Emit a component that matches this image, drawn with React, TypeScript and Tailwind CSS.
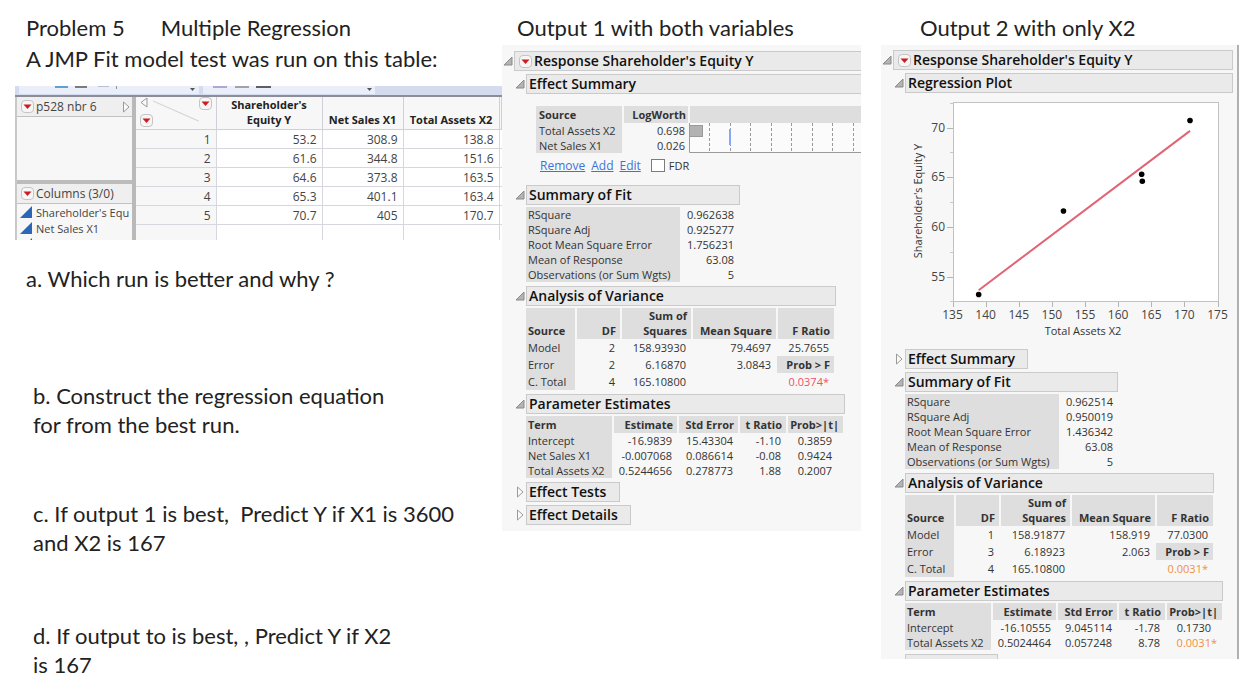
import React from "react";

type Cell = string;

const sourceRows: Cell[][] = [
    ["1", "53.2", "308.9", "138.8"],
    ["2", "61.6", "344.8", "151.6"],
    ["3", "64.6", "373.8", "163.5"],
    ["4", "65.3", "401.1", "163.4"],
    ["5", "70.7", "405", "170.7"],
];

const fitLabels = [
    "RSquare",
    "RSquare Adj",
    "Root Mean Square Error",
    "Mean of Response",
    "Observations (or Sum Wgts)",
];

const points = [
    [138.8, 53.2],
    [151.6, 61.6],
    [163.5, 64.6],
    [163.4, 65.3],
    [170.7, 70.7],
];

const RedTriangle: React.FC<{ label: string }> = ({ label }) => (
    <button
        type="button"
        aria-label={label}
        className="flex h-[13px] w-[13px] shrink-0 items-center justify-center rounded-sm border border-[#c4c4c4] bg-[#f6f6f6]"
    >
        <svg width="9" height="5" viewBox="0 0 9 5">
            <path d="M0.5 0.5h8L4.5 5z" fill="#cf1820" />
        </svg>
    </button>
);

const Disclosure: React.FC<{ open?: boolean; label: string }> = ({
    open = true,
    label,
}) => (
    <button
        type="button"
        aria-label={label}
        aria-expanded={open}
        className="flex w-3 shrink-0 items-center justify-center"
    >
        {open ? (
            <svg width="10" height="10" viewBox="0 0 10 10">
                <path d="M9 1v8H1z" fill="#b4b4b4" stroke="#8a8a8a" />
            </svg>
        ) : (
            <svg width="8" height="12" viewBox="0 0 8 12">
                <path d="M1.5 1v10L7 6z" fill="#fafafa" stroke="#9a9a9a" />
            </svg>
        )}
    </button>
);

const Title: React.FC<{
    text: string;
    width: string;
    open?: boolean;
    menu?: boolean;
}> = ({ text, width, open, menu }) => (
    <div className="flex h-5">
        <Disclosure open={open} label={`Toggle ${text}`} />
        <h3
            className={`flex min-w-0 items-center gap-0.5 border border-[#cacaca] bg-[#eaeaea] text-[14px] leading-none font-semibold whitespace-nowrap text-[#111] ${menu ? "pl-1" : "pl-0.5"} ${width}`}
        >
            {menu && <RedTriangle label={`${text} menu`} />}
            {text}
        </h3>
    </div>
);

const SummaryOfFit: React.FC<{ values: string[] }> = ({ values }) => (
    <table className="ml-3 mt-0.5 w-[210px] table-fixed">
        <colgroup>
            <col className="w-[154px]" />
            <col />
        </colgroup>
        <tbody>
            {fitLabels.map((label, i) => (
                <tr key={label} className="h-[15px]">
                    <th
                        scope="row"
                        className="bg-[#dedede] pl-0.5 text-left font-normal whitespace-nowrap"
                    >
                        {label}
                    </th>
                    <td className="pr-0.5 text-right">{values[i]}</td>
                </tr>
            ))}
        </tbody>
    </table>
);

const Variance: React.FC<{
    model: string[];
    error: string[];
    total: string[];
    prob: string;
    probColor: string;
}> = ({ model, error, total, prob, probColor }) => {
    const head = "border-r-2 border-[#f7f7f7] bg-[#dedede] pr-1 pb-px align-bottom";
    const label =
        "border-r-2 border-[#f7f7f7] bg-[#dedede] pl-0.5 text-left font-normal";
    return (
        <table className="ml-3 mt-0.5 w-[310px] table-fixed text-right whitespace-nowrap">
            <colgroup>
                <col className="w-[50px]" />
                <col className="w-[45px]" />
                <col className="w-[71px]" />
                <col className="w-[85px]" />
                <col />
            </colgroup>
            <thead>
                <tr className="h-[31px] leading-[15px]">
                    <th className={`${head} pl-0.5 text-left`}>Source</th>
                    <th className={head}>DF</th>
                    <th className={head}>
                        Sum of
                        <br />
                        Squares
                    </th>
                    <th className={head}>Mean Square</th>
                    <th className={head}>F Ratio</th>
                </tr>
            </thead>
            <tbody>
                <tr className="h-[17px]">
                    <th scope="row" className={label}>Model</th>
                    {model.map((v) => (
                        <td key={v} className="pr-1.5">{v}</td>
                    ))}
                </tr>
                <tr className="h-[17px]">
                    <th scope="row" className={label}>Error</th>
                    {error.map((v) => (
                        <td key={v} className="pr-1.5">{v}</td>
                    ))}
                    <th className="border-r-2 border-[#f7f7f7] bg-[#dedede] pr-1">
                        Prob &gt; F
                    </th>
                </tr>
                <tr className="h-[17px]">
                    <th scope="row" className={label}>C. Total</th>
                    {total.map((v) => (
                        <td key={v} className="pr-1.5">{v}</td>
                    ))}
                    <td />
                    <td className={`pr-1.5 ${probColor}`}>{prob}</td>
                </tr>
            </tbody>
        </table>
    );
};

const Estimates: React.FC<{ rows: string[][] }> = ({ rows }) => {
    const head = "border-r-2 border-[#f7f7f7] bg-[#dedede] pr-1";
    return (
        <table className="ml-3 mt-0.5 w-[319px] table-fixed text-right whitespace-nowrap">
            <colgroup>
                <col className="w-[87px]" />
                <col className="w-[65px]" />
                <col className="w-[61px]" />
                <col className="w-[48px]" />
                <col />
            </colgroup>
            <thead>
                <tr className="h-[17px]">
                    <th className={`${head} pl-0.5 text-left`}>Term</th>
                    <th className={head}>Estimate</th>
                    <th className={head}>Std Error</th>
                    <th className={head}>t Ratio</th>
                    <th className={head}>Prob&gt;|t|</th>
                </tr>
            </thead>
            <tbody>
                {rows.map(([term, ...values]) => (
                    <tr key={term} className="h-[15px]">
                        <th
                            scope="row"
                            className="border-r-2 border-[#f7f7f7] bg-[#dedede] pl-0.5 text-left font-normal"
                        >
                            {term}
                        </th>
                        {values.map((v, i) => (
                            <td
                                key={i}
                                className={
                                    v.endsWith("*")
                                        ? "pr-1.5 text-[#f0913f]"
                                        : i === 3
                                          ? "pr-3"
                                          : "pr-1.5"
                                }
                            >
                                {v}
                            </td>
                        ))}
                    </tr>
                ))}
            </tbody>
        </table>
    );
};

const EffectSummary: React.FC = () => (
    <div className="ml-[22px] mt-3">
        <table className="w-full table-fixed text-right whitespace-nowrap">
            <colgroup>
                <col className="w-[87px]" />
                <col className="w-[66px]" />
                <col />
            </colgroup>
            <thead>
                <tr className="h-[17px] bg-[#dedede]">
                    <th className="border-r-2 border-[#f7f7f7] pl-[3px] text-left">Source</th>
                    <th className="border-r-2 border-[#f7f7f7] pr-0.5">LogWorth</th>
                    <th aria-label="LogWorth bar" />
                </tr>
            </thead>
            <tbody>
                <tr className="h-[15px]">
                    <th
                        scope="row"
                        className="border-r-2 border-[#f7f7f7] bg-[#dedede] pl-[3px] text-left font-normal"
                    >
                        Total Assets X2
                    </th>
                    <td className="pr-1">0.698</td>
                    <td rowSpan={2} className="overflow-hidden p-0">
                        <svg width="172" height="30" className="block">
                            <rect x="0" y="0" width="172" height="30" fill="#fbfbfb" />
                            {[20, 41, 61, 82, 102, 123, 143, 164].map((x) => (
                                <path
                                    key={x}
                                    d={`M${x + 0.5} 0V30`}
                                    stroke="#999"
                                    strokeDasharray="3 2"
                                />
                            ))}
                            <path d="M0.5 0V29.5H172" fill="none" stroke="#9a9a9a" />
                            <rect x="0.5" y="2.5" width="13" height="11" fill="#b2b2b2" stroke="#9a9a9a" />
                            <rect x="40" y="6" width="2" height="16" fill="#86a8fa" />
                        </svg>
                    </td>
                </tr>
                <tr className="h-[15px]">
                    <th
                        scope="row"
                        className="border-r-2 border-[#f7f7f7] bg-[#dedede] pl-[3px] text-left font-normal"
                    >
                        Net Sales X1
                    </th>
                    <td className="pr-1">0.026</td>
                </tr>
            </tbody>
        </table>
        <div className="mt-1 flex h-4 items-center gap-1.5 pl-1 text-[12px]">
            <a href="#remove" className="text-[#3d73d9] underline">Remove</a>
            <a href="#add" className="text-[#3d73d9] underline">Add</a>
            <a href="#edit" className="text-[#3d73d9] underline">Edit</a>
            <label className="ml-1 flex items-center gap-1 text-[11px]">
                <input
                    type="checkbox"
                    className="h-[13px] w-[14px] appearance-none border border-[#7c7c7c] bg-white"
                />
                FDR
            </label>
        </div>
    </div>
);

const px = (x: number) => 72.5 + ((x - 135) / 40) * 265;
const py = (y: number) => 34.5 + ((70 - y) / 5) * 49.7;

const RegressionPlot: React.FC = () => (
    <svg
        width="356"
        height="256"
        className="-mr-1 block text-[12px]"
        role="img"
        aria-label="Regression plot"
    >
        <rect x="72.5" y="9.5" width="265" height="199" fill="#fff" stroke="#c2c2c2" />
        {[55, 60, 65, 70].map((v) => (
            <g key={v}>
                <path d={`M66 ${Math.round(py(v)) + 0.5}H72`} stroke="#b4b4b4" />
                <text x="64" y={py(v) + 4} textAnchor="end" fill="#444">
                    {v}
                </text>
            </g>
        ))}
        {[52.5, 57.5, 62.5, 67.5, 72.5].map((v) => (
            <path key={v} d={`M69 ${Math.round(py(v)) + 0.5}H72`} stroke="#c8c8c8" />
        ))}
        {[135, 140, 145, 150, 155, 160, 165, 170, 175].map((v) => (
            <g key={v}>
                <path d={`M${Math.round(px(v)) - 0.5} 209V214`} stroke="#b4b4b4" />
                <text x={px(v) - 1} y="226" textAnchor="middle" fill="#444">
                    {v}
                </text>
            </g>
        ))}
        <path
            d={`M${px(138.8)} ${py(53.63)}L${px(170.7)} ${py(69.66)}`}
            stroke="#e06474"
            strokeWidth="2"
        />
        {points.map(([x, y]) => (
            <circle key={x} cx={px(x)} cy={py(y)} r="2.8" fill="#000" />
        ))}
        <text x="202" y="242" textAnchor="middle" className="text-[11px]" fill="#333">
            Total Assets X2
        </text>
        <text
            transform="translate(41 108) rotate(-90)"
            textAnchor="middle"
            className="text-[11px]"
            fill="#333"
        >
            Shareholder's Equity Y
        </text>
    </svg>
);

const ColumnItem: React.FC<{ name: string }> = ({ name }) => (
    <li className="flex h-4 items-center gap-1 pl-[3px] whitespace-nowrap">
        <svg width="12" height="12" viewBox="0 0 12 12" className="shrink-0">
            <path d="M12 0v12H0z" fill="#2c66b8" />
        </svg>
        {name}
    </li>
);

const Toolbar: React.FC = () => (
    <div className="h-[9px] bg-[#d5dbee]">
        <svg width="360" height="9" className="block">
            <rect x="4" width="180" height="8" fill="#e9eef8" />
            <rect x="188" width="172" height="8" fill="#e9eef8" />
            <path d="M40 0h13v2h-13z" fill="#5f9fd6" />
            <path d="M60 0h12v2h-12z" fill="#7b7b7b" />
            <path d="M83 0h11v1h-11z" fill="#b9bfd2" />
            <path d="M101.5 0v3" stroke="#8c93a8" />
            <path d="M198 0h14v2h-14z" fill="#a9a9d4" />
            <path d="M220 0h14v2h-14z" fill="#a0a3ab" />
            <path d="M241 0h15v2h-15z" fill="#5b5f68" />
            <path d="M175 2h5l-2.500 3z" fill="#555" />
            <path d="M352 2h5l-2.500 3z" fill="#555" />
        </svg>
    </div>
);

const DataTable: React.FC = () => {
    const head = "border-r border-b border-[#cfcfd6] bg-[#f7f7f7] pb-0.5 align-bottom";
    return (
        <div className="ml-[15px] mt-3 h-[154px] overflow-hidden text-[12px] leading-[15px] text-[#444]">
            <Toolbar />
            <div className="flex h-[145px] border-t-2 border-[#8d8d97]">
                <div className="flex w-[121px] shrink-0 flex-col border-r-4 border-l-2 border-r-[#b9b9b9] border-l-[#c9c9c9] bg-[#f7f7f7]">
                    <div className="flex h-5 shrink-0 items-center gap-0.5 border-b border-[#c2c2c2] bg-[#efefef] pl-1">
                        <RedTriangle label="Table menu" />
                        <span className="flex-1 whitespace-nowrap">p528 nbr 6</span>
                        <Disclosure open={false} label="Toggle table panel" />
                    </div>
                    <div className="h-[63px] shrink-0" />
                    <div className="flex h-6 shrink-0 items-center gap-0.5 border-t-4 border-b border-t-[#bcbcbc] border-b-[#c2c2c2] bg-[#efefef] pl-1">
                        <RedTriangle label="Columns menu" />
                        <span className="whitespace-nowrap">Columns (3/0)</span>
                    </div>
                    <ul className="overflow-hidden text-[11px]">
                        <ColumnItem name="Shareholder's Equ" />
                        <ColumnItem name="Net Sales X1" />
                        <ColumnItem name="Total Assets X2" />
                    </ul>
                </div>
                <table className="w-full table-fixed self-start bg-white text-right">
                    <colgroup>
                        <col className="w-[80px]" />
                        <col className="w-[106px]" />
                        <col className="w-[81px]" />
                        <col className="w-[96px]" />
                        <col />
                    </colgroup>
                    <thead>
                        <tr className="h-8 text-center text-[11px] text-[#222]">
                            <th className={head}>
                                <div className="flex h-[30px] justify-between px-1">
                                    <div className="flex flex-col justify-between">
                                        <svg width="8" height="11" viewBox="0 0 8 11">
                                            <path d="M7 1v9L1 5.500z" fill="#fafafa" stroke="#9a9a9a" />
                                        </svg>
                                        <RedTriangle label="Rows menu" />
                                    </div>
                                    <svg className="min-w-0 flex-1" viewBox="0 0 40 30" preserveAspectRatio="none">
                                        <path d="M0 4L40 24" stroke="#d4d4d4" />
                                    </svg>
                                    <RedTriangle label="Column menu" />
                                </div>
                            </th>
                            <th className={head}>
                                Shareholder's
                                <br />
                                Equity Y
                            </th>
                            <th className={`${head} whitespace-nowrap`}>Net Sales X1</th>
                            <th className={`${head} whitespace-nowrap`}>Total Assets X2</th>
                            <th className={head} aria-label="Empty column" />
                        </tr>
                    </thead>
                    <tbody>
                        {[...sourceRows, ["", "", "", ""]].map((row, r) => (
                            <tr key={r} className="h-[19px]">
                                {row.map((v, c) => (
                                    <td
                                        key={c}
                                        className={`border-r border-b border-[#d6d6de] pr-[5px] ${c === 0 ? "bg-[#f7f7f7]" : ""}`}
                                    >
                                        {v}
                                    </td>
                                ))}
                                <td className="border-b border-[#d6d6de]" />
                            </tr>
                        ))}
                    </tbody>
                </table>
            </div>
        </div>
    );
};

const questionClass = "pl-[33px] leading-[29px]";

const App: React.FC = () => (
    <main className="grid min-h-screen grid-cols-[502fr_379fr_375fr] items-start bg-white pt-3 font-['Lato',sans-serif] text-[22px] leading-[31px] text-[#222]">
        <section className="min-w-0">
            <h1 className="flex gap-9 pl-[26px]">
                <span>Problem 5</span>
                <span>Multiple Regression</span>
            </h1>
            <p className="pl-[26px] whitespace-nowrap">
                A JMP Fit model test was run on this table:
            </p>
            <div className="font-['Open_Sans',sans-serif]">
                <DataTable />
            </div>
            <p className="mt-6 pl-[26px] leading-[29px]">a. Which run is better and why ?</p>
            <p className={`mt-22 ${questionClass}`}>
                b. Construct the regression equation
                <br />
                for from the best run.
            </p>
            <p className={`mt-15 ${questionClass}`}>
                c. If output 1 is best,&nbsp; Predict Y if X1 is 3600
                <br />
                and X2 is 167
            </p>
            <p className={`mt-16 ${questionClass}`}>
                d. If output to is best, , Predict Y if X2
                <br />
                is 167
            </p>
        </section>

        <section className="min-w-0 pr-5">
            <h2 className="pl-[15px] whitespace-nowrap">Output 1 with both variables</h2>
            <div className="mt-0.5 overflow-hidden bg-[#f7f7f7] pt-1.5 pb-1.5 font-['Open_Sans',sans-serif] text-[11px] leading-[15px] text-[#333]">
                <Title text="Response Shareholder's Equity Y" width="flex-1 border-r-0" menu />
                <div className="mt-[3px] pl-3">
                    <Title text="Effect Summary" width="flex-1 border-r-0" />
                    <EffectSummary />
                    <div className="mt-3">
                        <Title text="Summary of Fit" width="w-[214px]" />
                    </div>
                    <SummaryOfFit values={["0.962638", "0.925277", "1.756231", "63.08", "5"]} />
                    <div className="mt-1">
                        <Title text="Analysis of Variance" width="w-[310px]" />
                    </div>
                    <Variance
                        model={["2", "158.93930", "79.4697", "25.7655"]}
                        error={["2", "6.16870", "3.0843"]}
                        total={["4", "165.10800"]}
                        prob="0.0374*"
                        probColor="text-[#f0506a]"
                    />
                    <div className="mt-1">
                        <Title text="Parameter Estimates" width="w-[319px]" />
                    </div>
                    <Estimates
                        rows={[
                            ["Intercept", "-16.9839", "15.43304", "-1.10", "0.3859"],
                            ["Net Sales X1", "-0.007068", "0.086614", "-0.08", "0.9424"],
                            ["Total Assets X2", "0.5244656", "0.278773", "1.88", "0.2007"],
                        ]}
                    />
                    <div className="mt-1 flex flex-col gap-[3px]">
                        <Title text="Effect Tests" width="w-[94px]" open={false} />
                        <Title text="Effect Details" width="w-[105px]" open={false} />
                    </div>
                </div>
            </div>
        </section>

        <section className="min-w-0 pr-[17px]">
            <h2 className="pl-[39px] whitespace-nowrap">Output 2 with only X2</h2>
            <div className="mt-0.5 h-[614px] overflow-hidden border-r-2 border-[#b0b0b0] bg-[#f7f7f7] pt-[5px] font-['Open_Sans',sans-serif] text-[11px] leading-[15px] text-[#333]">
                <div className="pr-1">
                    <Title text="Response Shareholder's Equity Y" width="flex-1" menu />
                    <div className="mt-[3px] pl-3">
                        <Title text="Regression Plot" width="flex-1" />
                    </div>
                </div>
                <RegressionPlot />
                <div className="pl-3">
                    <Title text="Effect Summary" width="w-[123px]" open={false} />
                    <div className="mt-[3px]">
                        <Title text="Summary of Fit" width="w-[213px]" />
                    </div>
                    <SummaryOfFit values={["0.962514", "0.950019", "1.436342", "63.08", "5"]} />
                    <div className="mt-1">
                        <Title text="Analysis of Variance" width="w-[309px]" />
                    </div>
                    <Variance
                        model={["1", "158.91877", "158.919", "77.0300"]}
                        error={["3", "6.18923", "2.063"]}
                        total={["4", "165.10800"]}
                        prob="0.0031*"
                        probColor="text-[#f0913f]"
                    />
                    <div className="mt-1">
                        <Title text="Parameter Estimates" width="w-[318px]" />
                    </div>
                    <Estimates
                        rows={[
                            ["Intercept", "-16.10555", "9.045114", "-1.78", "0.1730"],
                            ["Total Assets X2", "0.5024464", "0.057248", "8.78", "0.0031*"],
                        ]}
                    />
                    <div className="mt-1 ml-3 h-5 w-[93px] border border-[#cacaca] bg-[#eaeaea]" />
                </div>
            </div>
        </section>
    </main>
);

export default App;
